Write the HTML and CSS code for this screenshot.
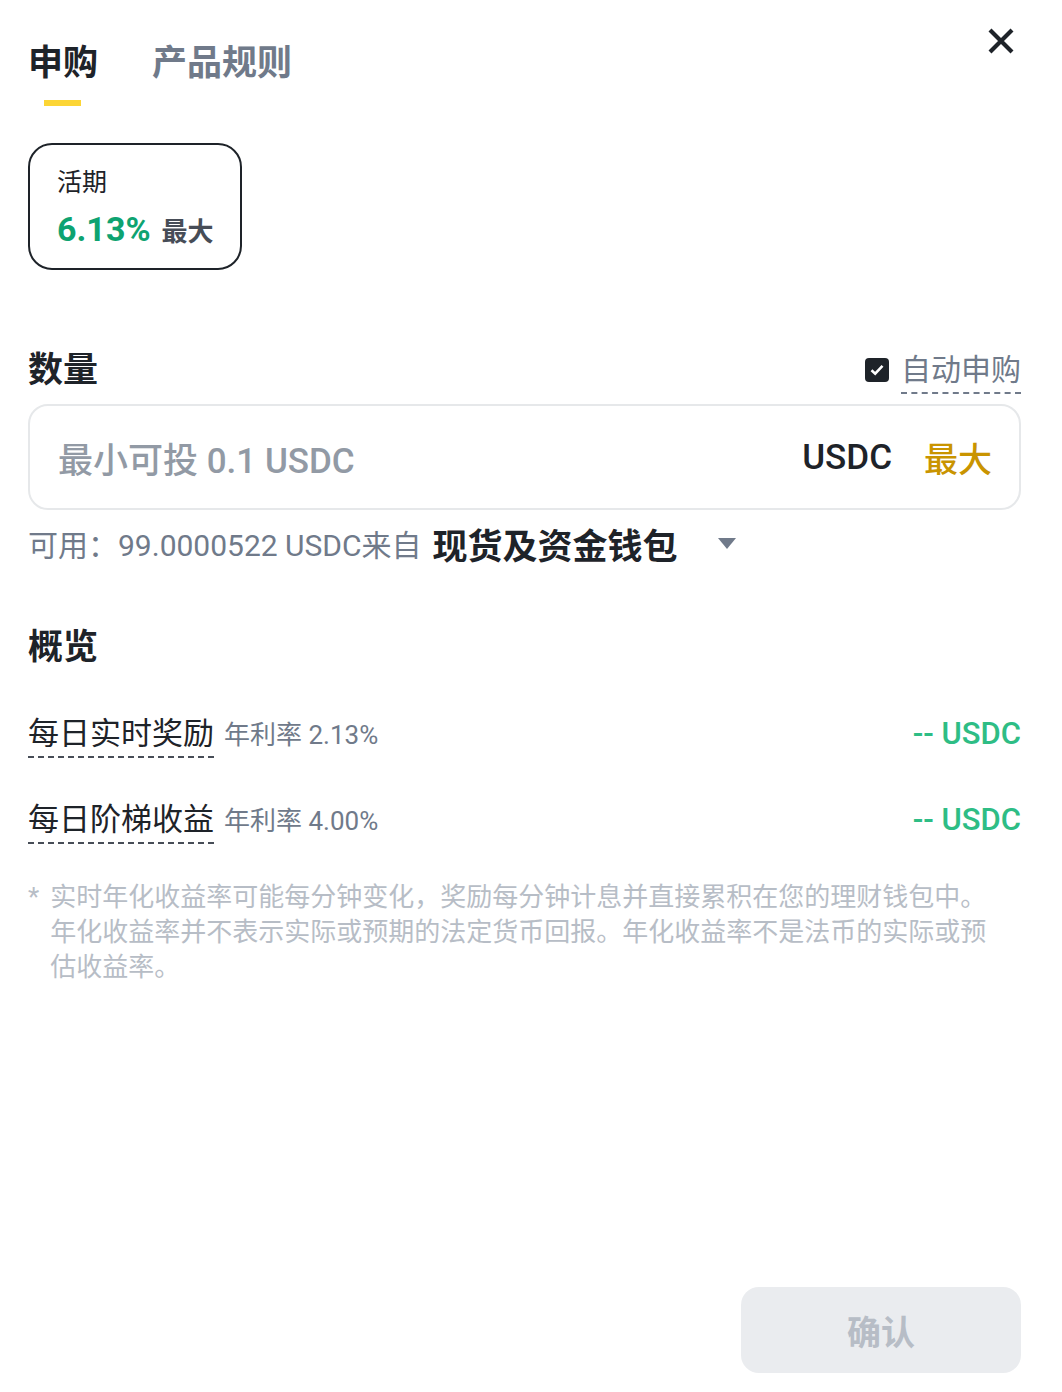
FILE: index.html
```html
<!DOCTYPE html>
<html lang="zh-CN">
<head>
  <meta charset="utf-8">
  <title>申购</title>
  <link rel="stylesheet" href="styles.css">
</head>
<body>
  <div class="page">
    <div class="header">
      <div class="tabs">
        <div class="tab active">申购</div>
        <div class="tab">产品规则</div>
      </div>
      <div class="close">
        <svg width="28" height="28" viewBox="0 0 28 28">
          <path d="M3 3 L25 25 M25 3 L3 25" stroke="#1e2329" stroke-width="4.2" stroke-linecap="butt"/>
        </svg>
      </div>
    </div>

    <div class="term-card">
      <div class="term-name">活期</div>
      <div class="term-rate"><span class="apr">6.13%</span><span class="apr-max">最大</span></div>
    </div>

    <div class="amount-head">
      <div class="section-title">数量</div>
      <div class="auto">
        <span class="checkbox">
          <svg width="14" height="12" viewBox="0 0 14 12">
            <path d="M1.5 6.2 L5.2 9.6 L12.5 1.8" fill="none" stroke="#fff" stroke-width="2.6"/>
          </svg>
        </span>
        <span class="auto-label">自动申购</span>
      </div>
    </div>

    <div class="amount-input">
      <span class="placeholder">最小可投 0.1 USDC</span>
      <span class="unit">USDC</span>
      <span class="max">最大</span>
    </div>

    <div class="available">
      <span class="avail-label">可用：99.0000522 USDC来自</span>
      <span class="wallet">现货及资金钱包</span>
      <span class="caret"></span>
    </div>

    <div class="section-title overview-title">概览</div>

    <div class="overview-row">
      <span class="row-label">每日实时奖励</span>
      <span class="row-rate">年利率 2.13%</span>
      <span class="row-value">-- USDC</span>
    </div>
    <div class="overview-row">
      <span class="row-label">每日阶梯收益</span>
      <span class="row-rate">年利率 4.00%</span>
      <span class="row-value">-- USDC</span>
    </div>

    <div class="note">
      <span class="star">*</span>
      <p>实时年化收益率可能每分钟变化，奖励每分钟计息并直接累积在您的理财钱包中。年化收益率并不表示实际或预期的法定货币回报。年化收益率不是法币的实际或预估收益率。</p>
    </div>

    <div class="footer">
      <div class="confirm">确认</div>
    </div>
  </div>
</body>
</html>
```

FILE: styles.css
```css
body {
  margin: 0;
  background: #fff;
  font-family: Roboto, "Noto Sans CJK SC", sans-serif;
  color: #1e2329;
}
.page {
  padding: 0 41px 0 28px;
  height: 1392px;
  box-sizing: border-box;
  display: flex;
  flex-direction: column;
}
.header {
  display: flex;
  justify-content: space-between;
  padding-top: 40px;
}
.tabs {
  display: flex;
  gap: 54px;
}
.tab {
  font-size: 35px;
  font-weight: 700;
  line-height: 48px;
  color: #707a8a;
  position: relative;
  padding-bottom: 18px;
}
.tab.active {
  color: #1e2329;
}
.tab.active::after {
  content: "";
  position: absolute;
  left: 16px;
  bottom: 0;
  width: 37px;
  height: 6px;
  background: #fcd535;
}
.close {
  margin-top: -13px;
  margin-right: 6px;
}
.term-card {
  margin-top: 37px;
  width: 214px;
  height: 127px;
  box-sizing: border-box;
  border: 2px solid #1e2329;
  border-radius: 24px;
  padding: 21px 0 0 27px;
}
.term-name {
  font-size: 25px;
  line-height: 34px;
}
.term-rate {
  margin-top: 9px;
  display: flex;
  align-items: baseline;
  gap: 11px;
}
.apr {
  font-size: 34px;
  font-weight: 700;
  color: #0ea371;
  line-height: 40px;
}
.apr-max {
  font-size: 26px;
  font-weight: 700;
  color: #474d57;
}
.amount-head {
  margin-top: 77px;
  display: flex;
  justify-content: space-between;
  align-items: center;
}
.section-title {
  font-size: 35px;
  font-weight: 700;
  line-height: 48px;
}
.auto {
  display: flex;
  align-items: center;
  gap: 12px;
}
.checkbox {
  width: 24px;
  height: 24px;
  border-radius: 4px;
  background: #1e2329;
  display: flex;
  align-items: center;
  justify-content: center;
  margin-top: -2px;
}
.auto-label {
  font-size: 30px;
  line-height: 40px;
  color: #707a8a;
  border-bottom: 2px dashed #707a8a;
  padding-bottom: 2px;
  margin-top: 2px;
}
.amount-input {
  margin-top: 9px;
  height: 106px;
  box-sizing: border-box;
  border: 2px solid #e6e8ea;
  border-radius: 20px;
  display: flex;
  align-items: center;
  padding: 0 27px 0 28px;
  font-size: 35px;
}
.placeholder {
  flex: 1;
  color: #929aa5;
  font-weight: 500;
}
.unit {
  font-weight: 500;
  color: #1e2329;
  margin-right: 32px;
}
.max {
  color: #c99400;
  font-weight: 500;
  font-size: 34px;
}
.available {
  margin-top: 11px;
  display: flex;
  align-items: center;
  height: 44px;
}
.avail-label {
  font-size: 30px;
  color: #707a8a;
}
.wallet {
  font-size: 35px;
  font-weight: 700;
  margin-left: 11px;
}
.caret {
  margin-left: 40px;
  width: 0;
  height: 0;
  border-left: 9px solid transparent;
  border-right: 9px solid transparent;
  border-top: 11px solid #707a8a;
}
.overview-title {
  margin-top: 59px;
}
.overview-row {
  display: flex;
  align-items: baseline;
  margin-top: 42px;
  height: 44px;
}
.overview-row + .overview-row {
  margin-top: 42px;
}
.row-label {
  font-size: 31px;
  line-height: 40px;
  color: #1e2329;
  border-bottom: 2px dashed #474d57;
  padding-bottom: 2px;
}
.row-rate {
  font-size: 26px;
  color: #707a8a;
  margin-left: 10px;
  flex: 1;
}
.row-value {
  font-size: 31px;
  font-weight: 500;
  color: #2ebd85;
}
.note {
  margin-top: 36px;
  display: flex;
  gap: 11px;
  font-size: 26px;
  line-height: 35px;
  color: #b7bdc6;
}
.note p {
  margin: 0;
  max-width: 950px;
}
.footer {
  margin-top: auto;
  display: flex;
  justify-content: flex-end;
  padding-bottom: 19px;
}
.confirm {
  width: 280px;
  height: 86px;
  border-radius: 18px;
  background: #eaecef;
  color: #b7bdc6;
  font-size: 34px;
  font-weight: 700;
  display: flex;
  align-items: center;
  justify-content: center;
}
```
